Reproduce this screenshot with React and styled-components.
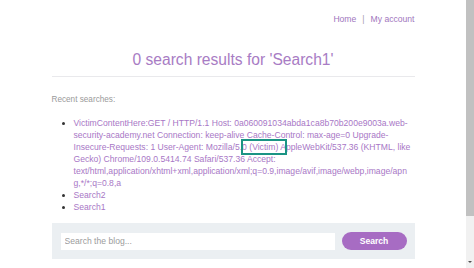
import React from 'react';
import styled, { createGlobalStyle } from 'styled-components';

const GlobalStyle = createGlobalStyle`
    html, body {
        margin: 0;
        padding: 0;
        background: #fff;
    }
    body {
        font-family: "Liberation Sans", Arial, sans-serif;
    }
`

const Screen = styled.div`
    display: flex;
    width: 474px;
    height: 268px;
    overflow: hidden;
`

const Page = styled.div`
    flex: 1;
    min-width: 0;
`

const Container = styled.div`
    width: 363px;
    margin: 0 auto;
`

const TopNav = styled.nav`
    display: flex;
    justify-content: flex-end;
    align-items: center;
    gap: 6px;
    padding-top: 14px;
    font-size: 8.6px;
    line-height: 10px;
    color: #a8a0ae;
`

const NavLink = styled.a`
    color: #a177be;
    text-decoration: none;
`

const Title = styled.h1`
    margin: 0;
    margin-top: 27px;
    padding-bottom: 7px;
    border-bottom: 1.5px solid #e9e9ec;
    text-align: center;
    font-size: 15.6px;
    line-height: 18px;
    font-weight: normal;
    color: #a87cc4;
`

const Recent = styled.p`
    margin: 17px 0 0;
    font-size: 8.2px;
    line-height: 12px;
    color: #9a9a9a;
`

const SearchList = styled.ul`
    margin: 11px 0 0;
    padding-left: 22px;
    padding-right: 3.5px;
    font-size: 8.6px;
    line-height: 12px;
    color: #a877c6;
    overflow-wrap: break-word;
    li::marker {
        color: #333;
    }
`

const Highlight = styled.span`
    position: relative;
    &::after {
        content: "";
        position: absolute;
        top: -3px;
        bottom: -3px;
        left: -1px;
        right: -9px;
        border: 2.5px solid #1a9484;
    }
`

const SearchBox = styled.form`
    display: flex;
    align-items: center;
    gap: 7px;
    margin-top: 10px;
    padding: 9px 8px 9px 9px;
    background: #ebeff2;
`

const SearchInput = styled.input`
    flex: 1;
    min-width: 0;
    height: 17px;
    box-sizing: border-box;
    border: none;
    padding: 0 4px;
    font-family: inherit;
    font-size: 8.6px;
    background: #fff;
    &::placeholder {
        color: #9c9c9c;
    }
`

const SearchButton = styled.button`
    width: 65px;
    height: 18px;
    border: none;
    border-radius: 9px;
    background: #a76cc3;
    color: #fff;
    font-family: inherit;
    font-weight: bold;
    font-size: 8.6px;
    padding: 0;
`

const Scrollbar = styled.div`
    width: 8px;
    display: flex;
    flex-direction: column;
    background: #f1f1f1;
`

const Thumb = styled.div`
    height: 216px;
    background: #c1c1c1;
`

const Track = styled.div`
    flex: 1;
    display: flex;
    align-items: flex-end;
    justify-content: center;
    padding-bottom: 5px;
`

const Arrow = styled.div`
    width: 0;
    height: 0;
    border-left: 2px solid transparent;
    border-right: 2px solid transparent;
    border-top: 2px solid #505050;
`

export default function App() {
    return (
        <>
            <GlobalStyle />
            <Screen>
                <Page>
                    <Container>
                        <TopNav>
                            <NavLink href="#">Home</NavLink>
                            <span>|</span>
                            <NavLink href="#">My account</NavLink>
                        </TopNav>
                        <Title>0 search results for 'Search1'</Title>
                        <Recent>Recent searches:</Recent>
                        <SearchList>
                            <li>
                                VictimContentHere:GET / HTTP/1.1 Host: 0a060091034abda1ca8b70b200e9003a.web-security-academy.net Connection: keep-alive Cache-Control: max-age=0 Upgrade-Insecure-Requests: 1 User-Agent: Mozilla/5.<Highlight>0 (Victim)</Highlight> AppleWebKit/537.36 (KHTML, like Gecko) Chrome/109.0.5414.74 Safari/537.36 Accept: text/html,application/xhtml+xml,application/xml;q=0.9,image/avif,image/webp,image/apng,*/*;q=0.8,a
                            </li>
                            <li>Search2</li>
                            <li>Search1</li>
                        </SearchList>
                        <SearchBox onSubmit={e => e.preventDefault()}>
                            <SearchInput type="text" placeholder="Search the blog..." />
                            <SearchButton type="submit">Search</SearchButton>
                        </SearchBox>
                    </Container>
                </Page>
                <Scrollbar>
                    <Thumb />
                    <Track>
                        <Arrow />
                    </Track>
                </Scrollbar>
            </Screen>
        </>
    )
}
